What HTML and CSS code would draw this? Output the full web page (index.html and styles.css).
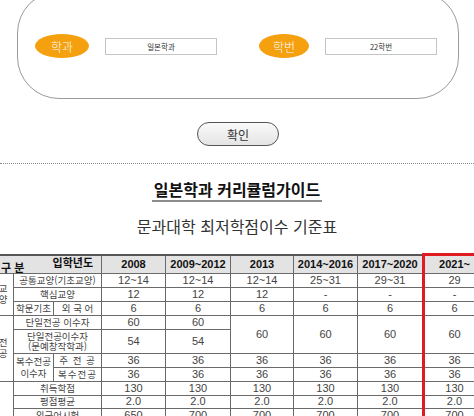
FILE: index.html
```html
<!DOCTYPE html>
<html lang="ko">
<head>
<meta charset="utf-8">
<title>일본학과 커리큘럼가이드</title>
<link rel="stylesheet" href="styles.css">
</head>
<body>
<div class="panel">
  <div class="field">
    <span class="pill pill-wide">학과</span>
    <div class="box">일본학과</div>
  </div>
  <div class="field">
    <span class="pill">학번</span>
    <div class="box">22학번</div>
  </div>
</div>
<div class="actions"><button class="confirm">확인</button></div>
<hr class="divider">
<div class="title-wrap"><h1 class="title">일본학과 커리큘럼가이드</h1></div>
<p class="subtitle">문과대학 최저학점이수 기준표</p>
<div class="table-wrap">
  <table class="guide">
    <colgroup>
      <col class="c-grp"><col class="c-sub"><col class="c-sub2">
      <col class="c-y1"><col class="c-y2"><col class="c-y3"><col class="c-y4"><col class="c-y5"><col class="c-y6">
    </colgroup>
    <tr class="h-row">
      <th colspan="3" class="diag"><span class="d-top">입학년도</span><span class="d-bot">구 분</span></th>
      <th>2008</th><th>2009~2012</th><th>2013</th><th>2014~2016</th><th>2017~2020</th><th>2021~</th>
    </tr>
    <tr class="r14">
      <td rowspan="3" class="grp">교<br>양</td>
      <td colspan="2" class="ko">공통교양(기초교양)</td>
      <td>12~14</td><td>12~14</td><td>12~14</td><td>25~31</td><td>29~31</td><td>29</td>
    </tr>
    <tr class="r14">
      <td colspan="2" class="ko">핵심교양</td>
      <td>12</td><td>12</td><td>12</td><td>-</td><td>-</td><td>-</td>
    </tr>
    <tr class="r14">
      <td class="ko">학문기초</td><td class="ko">외 국 어</td>
      <td>6</td><td>6</td><td>6</td><td>6</td><td>6</td><td>6</td>
    </tr>
    <tr class="r14">
      <td rowspan="4" class="grp">전<br>공</td>
      <td colspan="2" class="ko">단일전공 이수자</td>
      <td>60</td><td>60</td><td rowspan="2">60</td><td rowspan="2">60</td><td rowspan="2">60</td><td rowspan="2">60</td>
    </tr>
    <tr class="r24">
      <td colspan="2" class="ko two">단일전공이수자<br>(문예창작학과)</td>
      <td>54</td><td>54</td>
    </tr>
    <tr class="r14">
      <td rowspan="2" class="ko dual">복수전공<br>이수자</td>
      <td class="ko spaced">주 전 공</td>
      <td>36</td><td>36</td><td>36</td><td>36</td><td>36</td><td>36</td>
    </tr>
    <tr class="r14">
      <td class="ko spaced">복수전공</td>
      <td>36</td><td>36</td><td>36</td><td>36</td><td>36</td><td>36</td>
    </tr>
    <tr class="r14">
      <td rowspan="3" class="grp"></td>
      <td colspan="2" class="ko">취득학점</td>
      <td>130</td><td>130</td><td>130</td><td>130</td><td>130</td><td>130</td>
    </tr>
    <tr class="r13">
      <td colspan="2" class="ko">평점평균</td>
      <td>2.0</td><td>2.0</td><td>2.0</td><td>2.0</td><td>2.0</td><td>2.0</td>
    </tr>
    <tr class="r14">
      <td colspan="2" class="ko">외국어시험</td>
      <td>650</td><td>700</td><td>700</td><td>700</td><td>700</td><td>700</td>
    </tr>
  </table>
  <div class="highlight"></div>
</div>
</body>
</html>
```

FILE: styles.css
```css
html, body {
  margin: 0;
  padding: 0;
  background: #fff;
}
body {
  width: 474px;
  height: 416px;
  overflow: hidden;
  font-family: "Noto Sans CJK KR", "Noto Sans", sans-serif;
  color: #333;
}
.panel {
  box-sizing: border-box;
  margin: -9px 15px 0 17px;
  height: 108px;
  border: 1px solid #9a9a9a;
  border-radius: 42px;
  display: flex;
  align-items: center;
  padding: 2px 0 0 17px;
  gap: 42px;
}
.field {
  display: flex;
  align-items: center;
  gap: 16px;
}
.pill {
  display: flex;
  align-items: center;
  justify-content: center;
  width: 50px;
  height: 24px;
  border-radius: 50%;
  background: #f5a00e;
  color: #fff;
  font-size: 12px;
  font-weight: 300;
}
.pill-wide {
  width: 54px;
}
.box {
  box-sizing: border-box;
  width: 112px;
  height: 17px;
  border: 1px solid #c4c4c4;
  background: #fff;
  display: flex;
  align-items: center;
  justify-content: center;
  font-size: 7.5px;
  color: #333;
}
.actions {
  display: flex;
  justify-content: center;
  margin-top: 23px;
}
.confirm {
  box-sizing: border-box;
  width: 82px;
  height: 24px;
  border: 1px solid #555;
  border-radius: 12px;
  background: linear-gradient(#fafafa, #e4e4e4);
  font-family: "Noto Sans CJK KR", sans-serif;
  font-size: 12px;
  color: #333;
  padding: 0;
  margin-left: 2px;
}
.divider {
  margin: 17px 0 0;
  border: 0;
  border-top: 1px dotted #8a8a8a;
  height: 0;
}
.title-wrap {
  display: flex;
  justify-content: center;
  margin-top: 15px;
}
.title {
  margin: 0;
  font-size: 16px;
  line-height: 20px;
  font-weight: 700;
  color: #111;
  padding: 0 2px 1px;
  border-bottom: 2px solid #8c8c8c;
}
.subtitle {
  margin: 14px 0 0;
  text-align: center;
  font-size: 16px;
  line-height: 20px;
  color: #333;
}
.table-wrap {
  position: relative;
  margin-top: 18px;
  margin-left: -8px;
  width: 500px;
}
.guide {
  border-collapse: collapse;
  table-layout: fixed;
  width: 494px;
  font-family: "Liberation Sans", "Noto Sans CJK KR", sans-serif;
  font-size: 11px;
  color: #444;
}
.c-grp { width: 21px; }
.c-sub { width: 40px; }
.c-sub2 { width: 48px; }
.c-y1 { width: 64px; }
.c-y2 { width: 65px; }
.c-y3 { width: 63px; }
.c-y4 { width: 64px; }
.c-y5 { width: 65px; }
.c-y6 { width: 64px; }
.guide th, .guide td {
  border: 1px solid #6a6a6a;
  padding: 0;
  text-align: center;
  white-space: nowrap;
  line-height: 11px;
}
.guide th {
  background: #e3e3e3;
  color: #111;
  font-weight: 700;
  font-size: 11px;
  border-top: 2px solid #555;
}
.h-row { height: 18px; }
.r14 { height: 14px; }
.r13 { height: 13px; }
.r24 { height: 24px; }
.ko {
  font-family: "Noto Sans CJK KR", sans-serif;
  font-size: 9.5px;
}
.two {
  line-height: 10px !important;
}
.dual {
  line-height: 12px !important;
}
.spaced {
  letter-spacing: 1px;
}
.grp {
  font-family: "Noto Sans CJK KR", sans-serif;
  font-size: 9.5px;
  line-height: 11px !important;
}
.diag {
  position: relative;
  background: #e3e3e3 linear-gradient(to top right, transparent calc(50% - 0.6px), #666 50%, transparent calc(50% + 0.6px));
  font-family: "Noto Sans CJK KR", sans-serif;
  font-size: 9.5px;
}
.d-top {
  position: absolute;
  right: 8px;
  top: 1px;
}
.d-bot {
  position: absolute;
  left: 8px;
  bottom: 0;
}
.highlight {
  position: absolute;
  left: 430px;
  top: -1px;
  width: 70px;
  height: 200px;
  border: 3px solid #e11b22;
  box-sizing: border-box;
}
```
